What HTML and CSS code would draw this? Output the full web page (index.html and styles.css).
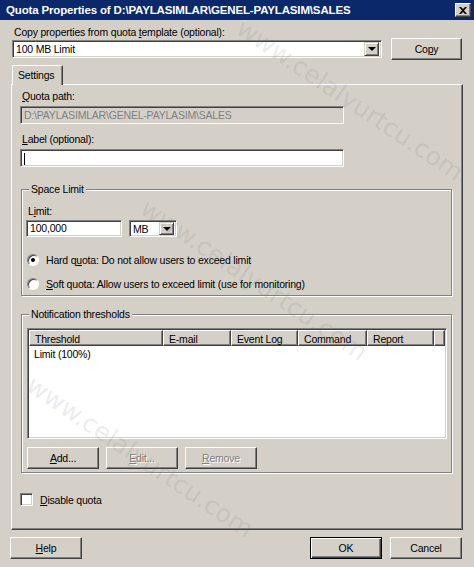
FILE: index.html
```html
<!DOCTYPE html>
<html lang="en">
<head>
    <meta charset="UTF-8">
    <title>Quota Properties</title>
    <link rel="stylesheet" href="styles.css">
</head>
<body>
    <div class="dialog">
        <div class="titlebar">
            <span class="title">Quota Properties of D:\PAYLASIMLAR\GENEL-PAYLASIM\SALES</span>
            <span class="close">
                <svg width="8" height="7" viewBox="0 0 8 7"><path d="M0 0h2l2 2 2-2h2L5 3.5 8 7H6L4 5 2 7H0l3-3.5z" fill="#000"/></svg>
            </span>
        </div>

        <div class="top">
            <div class="lbl">Copy properties from quota <u>t</u>emplate (optional):</div>
            <div class="row">
                <div class="combo combo-wide">
                    <span class="combo-text">100 MB Limit</span>
                    <span class="drop"><i></i></span>
                </div>
                <button class="btn btn-copy">Co<u>p</u>y</button>
            </div>
        </div>

        <div class="tabs">
            <div class="tab">Settings</div>
        </div>
        <div class="panel">
            <div class="lbl field-lbl"><u>Q</u>uota path:</div>
            <div class="field field-path disabled">D:\PAYLASIMLAR\GENEL-PAYLASIM\SALES</div>

            <div class="lbl field-lbl gap-lbl"><u>L</u>abel (optional):</div>
            <div class="field field-path"><span class="caret"></span></div>

            <div class="group group-space">
                <span class="group-title">Space Limit</span>
                <div class="lbl field-lbl">L<u>i</u>mit:</div>
                <div class="limit-row">
                    <div class="field field-limit">100,000</div>
                    <div class="combo combo-unit">
                        <span class="combo-text">MB</span>
                        <span class="drop"><i></i></span>
                    </div>
                </div>
                <label class="opt opt-first">
                    <span class="radio on"></span>
                    <span>Hard q<u>u</u>ota: Do not allow users to exceed limit</span>
                </label>
                <label class="opt">
                    <span class="radio"></span>
                    <span><u>S</u>oft quota: Allow users to exceed limit (use for monitoring)</span>
                </label>
            </div>

            <div class="group group-notify">
                <span class="group-title">Notification thresholds</span>
                <div class="listview">
                    <div class="lv-head">
                        <span>Threshold</span>
                        <span>E-mail</span>
                        <span>Event Log</span>
                        <span>Command</span>
                        <span>Report</span>
                        <span></span>
                    </div>
                    <div class="lv-row">Limit (100%)</div>
                </div>
                <div class="lv-buttons">
                    <button class="btn"><u>A</u>dd...</button>
                    <button class="btn" disabled><u>E</u>dit...</button>
                    <button class="btn" disabled><u>R</u>emove</button>
                </div>
            </div>

            <label class="opt check-row">
                <span class="check"></span>
                <span><u>D</u>isable quota</span>
            </label>
        </div>

        <div class="footer">
            <button class="btn"><u>H</u>elp</button>
            <div class="footer-right">
                <button class="btn btn-default">OK</button>
                <button class="btn">Cancel</button>
            </div>
        </div>

        <!-- site stamp over the dialog -->
        <div class="stamp">
            <span class="s1">www.celalyurtcu.com</span>
            <span class="s2">www.celalyurtcu.com</span>
            <span class="s3">www.celalyurtcu.com</span>
        </div>
    </div>
</body>
</html>
```

FILE: styles.css
```css
*{ margin: 0; padding: 0; box-sizing: border-box;}
body{ background: #d4d0c8; font: 10.5px/12px "Liberation Sans", Arial, sans-serif; letter-spacing: -0.2px; color: #000;}
u{ text-decoration: underline; text-underline-offset: 1px;}

.dialog{ position: relative; width: 474px; height: 567px; overflow: hidden; background: #d4d0c8;}

/* title bar */
.titlebar{ height: 20px; display: flex; align-items: center; justify-content: space-between; padding: 0 3px 0 6px; background: #0b286a; color: #fff;}
.title{ font-weight: bold; font-size: 11.5px; letter-spacing: -0.15px;}
.close{ width: 16px; height: 14px; display: flex; align-items: center; justify-content: center; background: #d4d0c8; border: 1px solid; border-color: #fff #404040 #404040 #fff; box-shadow: inset -1px -1px #808080;}

/* classic 3d pieces */
.btn{ height: 22px; width: 72px; font: inherit; letter-spacing: inherit; color: #000; background: #d4d0c8; border: 1px solid; border-color: #fff #404040 #404040 #fff; box-shadow: inset -1px -1px #808080, inset 1px 1px #d4d0c8;}
.btn:disabled{ color: #808080; text-shadow: 1px 1px #fff;}
.btn-default{ border-color: #000; box-shadow: inset 1px 1px #fff, inset -1px -1px #404040, inset -2px -2px #808080;}

.field{ height: 18px; background: #fff; border: 1px solid; border-color: #808080 #fff #fff #808080; box-shadow: inset 1px 1px #404040, inset -1px -1px #d4d0c8; padding: 2px 0 0 3px; white-space: nowrap; overflow: hidden;}
.field.disabled{ background: #d4d0c8; color: #808080;}
.caret{ display: inline-block; width: 1px; height: 12px; background: #000; margin-top: 1px;}

.combo{ display: flex; align-items: center; height: 18px; background: #fff; border: 1px solid; border-color: #808080 #fff #fff #808080; box-shadow: inset 1px 1px #404040, inset -1px -1px #d4d0c8; padding: 2px;}
.combo-text{ flex: 1; padding-left: 1px;}
.drop{ width: 15px; height: 14px; display: flex; align-items: center; justify-content: center; background: #d4d0c8; border: 1px solid; border-color: #d4d0c8 #404040 #404040 #d4d0c8; box-shadow: inset 1px 1px #fff, inset -1px -1px #808080;}
.drop i{ width: 0; height: 0; border-left: 4px solid transparent; border-right: 4px solid transparent; border-top: 4px solid #000;}

/* top row */
.top{ padding: 6px 11px 0 12px;}
.top .lbl{ padding-left: 2px;}
.row{ display: flex; align-items: center; height: 22px;}
.combo-wide{ width: 370px;}
.btn-copy{ margin-left: 9px; width: 71px;}

/* tab */
.tabs{ display: flex; padding: 5px 0 0 12px;}
.tab{ position: relative; z-index: 1; width: 51px; height: 20px; margin-bottom: -1px; padding: 3px 0 0 5px; background: #d4d0c8; border: 1px solid; border-bottom: none; border-color: #fff #404040 #404040 #fff; box-shadow: inset -1px 0 #808080;}
.panel{ height: 446px; margin: 0 11px; border: 1px solid; border-color: #fff #404040 #404040 #fff; box-shadow: inset -1px -1px #808080; padding: 5px 0 0 8px;}

.field-lbl{ padding-left: 2px; height: 12px;}
.panel > .field{ margin-top: 4px;}
.field-path{ width: 324px;}
.gap-lbl{ margin-top: 9px;}

/* group boxes */
.group{ position: relative; width: 431px; margin-left: 1px; border: 1px solid #808080; box-shadow: 1px 1px #fff, inset 1px 1px #fff;}
.group-title{ position: absolute; top: -7px; left: 7px; padding: 0 2px; background: #d4d0c8; line-height: 12px;}
.group-space{ margin-top: 22px; height: 107px; padding: 15px 0 0 4px;}
.limit-row{ display: flex; gap: 7px; margin-top: 3px;}
.field-limit{ width: 96px; height: 17px; padding-top: 1px;}
.combo-unit{ width: 48px; height: 17px;}
.combo-unit .drop{ height: 13px;}

.opt{ display: flex; align-items: center; gap: 7px; height: 13px; margin-top: 11px; padding-left: 1px;}
.opt-first{ margin-top: 16px;}
.radio{ width: 12px; height: 12px; border-radius: 50%; background: #fff; border: 1px solid; border-color: #808080 #fff #fff #808080; box-shadow: inset 1px 1px #404040; display: flex; align-items: center; justify-content: center;}
.radio.on::after{ content: ""; width: 4px; height: 4px; border-radius: 50%; background: #000;}

.group-notify{ margin-top: 18px; height: 159px; padding: 13px 0 0 5px;}
.listview{ width: 420px; height: 111px; background: #fff; border: 1px solid; border-color: #808080 #fff #fff #808080; box-shadow: inset 1px 1px #404040, inset -1px -1px #d4d0c8; padding: 1px;}
.lv-head{ display: grid; grid-template-columns: 134px 68px 67px 69px 67px 1fr; height: 16px;}
.lv-head span{ background: #d4d0c8; padding: 2px 0 0 5px; border: 1px solid; border-color: #fff #404040 #404040 #fff; box-shadow: inset -1px -1px #808080; white-space: nowrap; overflow: hidden;}
.lv-row{ padding: 2px 0 0 5px;}
.lv-buttons{ display: flex; gap: 7px; margin-top: 8px;}

.check-row{ margin-top: 20px; padding-left: 0; gap: 7px;}
.check{ width: 13px; height: 13px; background: #fff; border: 1px solid; border-color: #808080 #fff #fff #808080; box-shadow: inset 1px 1px #404040, inset -1px -1px #d4d0c8;}

/* footer */
.footer{ display: flex; justify-content: space-between; padding: 7px 12px 0 10px;}
.footer-right{ display: flex; gap: 8px;}

/* stamp */
.stamp{ position: absolute; inset: 0; pointer-events: none;}
.stamp span{ position: absolute; transform: translate(-50%, -50%) rotate(34deg); font: 25px "DejaVu Sans", sans-serif; letter-spacing: 0; color: rgba(110, 110, 110, 0.14); white-space: nowrap;}
.s1{ left: 350px; top: 100px;}
.s2{ left: 254px; top: 280px;}
.s3{ left: 140px; top: 457px;}
```
